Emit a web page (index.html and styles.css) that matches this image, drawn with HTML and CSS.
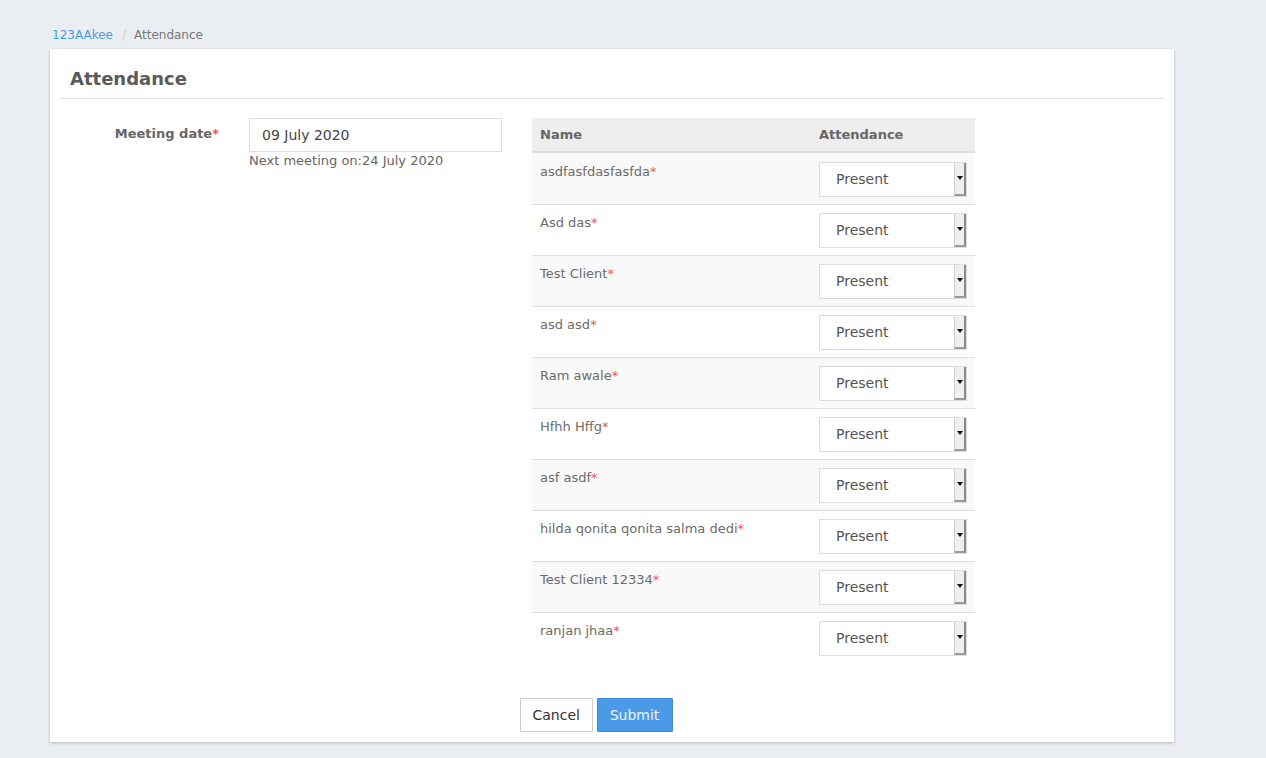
FILE: index.html
```html
<!DOCTYPE html>
<html>
<head>
<meta charset="utf-8">
<link rel="stylesheet" href="styles.css">
</head>
<body>
<div class="page">
  <div class="breadcrumb"><a href="#">123AAkee</a><span class="sep">/</span><span class="current">Attendance</span></div>
  <div class="panel">
    <div class="panel-head"><h1>Attendance</h1></div>
    <div class="panel-body">
      <div class="form-row">
        <div class="field-label">Meeting date<span class="req">*</span></div>
        <div class="field">
          <input class="text-input" type="text" value="09 July 2020">
          <div class="help">Next meeting on:24 July 2020</div>
        </div>
        <table class="att-table">
          <thead><tr><th class="c-name">Name</th><th class="c-att">Attendance</th></tr></thead>
          <tbody>
            <tr><td>asdfasfdasfasfda<span class="req">*</span></td><td><div class="sel"><span class="sel-text">Present</span><span class="sel-btn"></span></div></td></tr>
            <tr><td>Asd das<span class="req">*</span></td><td><div class="sel"><span class="sel-text">Present</span><span class="sel-btn"></span></div></td></tr>
            <tr><td>Test Client<span class="req">*</span></td><td><div class="sel"><span class="sel-text">Present</span><span class="sel-btn"></span></div></td></tr>
            <tr><td>asd asd<span class="req">*</span></td><td><div class="sel"><span class="sel-text">Present</span><span class="sel-btn"></span></div></td></tr>
            <tr><td>Ram awale<span class="req">*</span></td><td><div class="sel"><span class="sel-text">Present</span><span class="sel-btn"></span></div></td></tr>
            <tr><td>Hfhh Hffg<span class="req">*</span></td><td><div class="sel"><span class="sel-text">Present</span><span class="sel-btn"></span></div></td></tr>
            <tr><td>asf asdf<span class="req">*</span></td><td><div class="sel"><span class="sel-text">Present</span><span class="sel-btn"></span></div></td></tr>
            <tr><td>hilda qonita qonita salma dedi<span class="req">*</span></td><td><div class="sel"><span class="sel-text">Present</span><span class="sel-btn"></span></div></td></tr>
            <tr><td>Test Client 12334<span class="req">*</span></td><td><div class="sel"><span class="sel-text">Present</span><span class="sel-btn"></span></div></td></tr>
            <tr><td>ranjan jhaa<span class="req">*</span></td><td><div class="sel"><span class="sel-text">Present</span><span class="sel-btn"></span></div></td></tr>
          </tbody>
        </table>
      </div>
      <div class="actions">
        <button class="btn btn-default">Cancel</button>
        <button class="btn btn-primary">Submit</button>
      </div>
    </div>
  </div>
</div>
</body>
</html>
```
FILE: styles.css
```css
* { box-sizing: border-box; }
html, body { margin: 0; padding: 0; }
body {
  background: #eaedf1;
  font-family: "DejaVu Sans", "Noto Sans", sans-serif;
  font-size: 13px;
  color: #666;
  height: 758px;
}
.page { padding: 27px 92px 0 50px; }
.breadcrumb {
  font-size: 12px;
  line-height: 17px;
  padding-left: 2px;
  margin-bottom: 5px;
}
.breadcrumb a { color: #4a9ae8; text-decoration: none; }
.breadcrumb .sep { color: #ccc; padding: 0 8px 0 9px; }
.breadcrumb .current { color: #777; }
.panel {
  background: #fff;
  box-shadow: 0 1px 3px rgba(0,0,0,0.22);
  padding: 0 10px;
  height: 693px;
}
.panel-head {
  border-bottom: 1px solid #e3e3e3;
  padding: 18px 10px 0;
  height: 50px;
}
.panel-head h1 {
  margin: 0;
  font-size: 18px;
  line-height: 24px;
  font-weight: bold;
  color: #5a5a5a;
}
.panel-body { padding-top: 19px; }
.form-row { display: flex; align-items: flex-start; }
.field-label {
  width: 159px;
  text-align: right;
  font-weight: bold;
  color: #666;
  padding-top: 7px;
  line-height: 17px;
}
.req { color: #e35b5b; font-weight: normal; }
.field-label .req { font-weight: bold; }
.field { width: 253px; margin-left: 30px; }
.text-input {
  display: block;
  width: 253px;
  height: 34px;
  border: 1px solid #ddd;
  padding: 0 12px;
  font-family: inherit;
  font-size: 14px;
  color: #444;
  outline: none;
}
.help { margin-top: 1px; line-height: 16px; color: #666; }
.att-table {
  margin-left: 30px;
  width: 443px;
  border-collapse: collapse;
}
.att-table th {
  background: #eeeeee;
  text-align: left;
  font-weight: bold;
  color: #666;
  height: 34px;
  padding: 0 8px;
  border-bottom: 2px solid #dddddd;
  vertical-align: middle;
}
.att-table th.c-name { width: 279px; }
.att-table td {
  border-top: 1px solid #dddddd;
  padding: 8px 8px 7px;
  vertical-align: top;
  line-height: 20px;
}
.att-table tbody tr:first-child td { padding-top: 9px; }
.att-table tbody tr:nth-child(odd) td { background: #f9f9f9; }
.att-table td:first-child { color: #6b6b6b; }
.sel {
  position: relative;
  width: 148px;
  height: 35px;
  border: 1px solid #dcdcdc;
  background: #fff;
  display: flex;
  align-items: center;
}
.sel-text { padding-left: 16px; padding-bottom: 2px; font-size: 14px; color: #555; }
.sel-btn {
  position: absolute;
  right: 0;
  top: 0;
  bottom: 0;
  width: 12px;
  background: #efefef;
  border-left: 1px solid #cfcfcf;
  border-right: 2px solid #8a8a8a;
  border-bottom: 2px solid #9a9a9a;
}
.sel-btn::after {
  content: "";
  position: absolute;
  left: 2px;
  top: 13px;
  border-left: 3px solid transparent;
  border-right: 3px solid transparent;
  border-top: 4px solid #111;
}
.actions {
  display: flex;
  justify-content: center;
  gap: 4px;
  margin-top: 35px;
  padding-right: 32px;
}
.btn {
  font-family: inherit;
  font-size: 14px;
  height: 34px;
  padding: 0 12px;
  border: 1px solid #ccc;
  background: #fff;
  color: #333;
  border-radius: 1px;
}
.btn-default { width: 73px; }
.btn-primary {
  width: 76px;
  background: #4a9ae8;
  border-color: #3b8ad8;
  color: #eaf3fd;
}
```
